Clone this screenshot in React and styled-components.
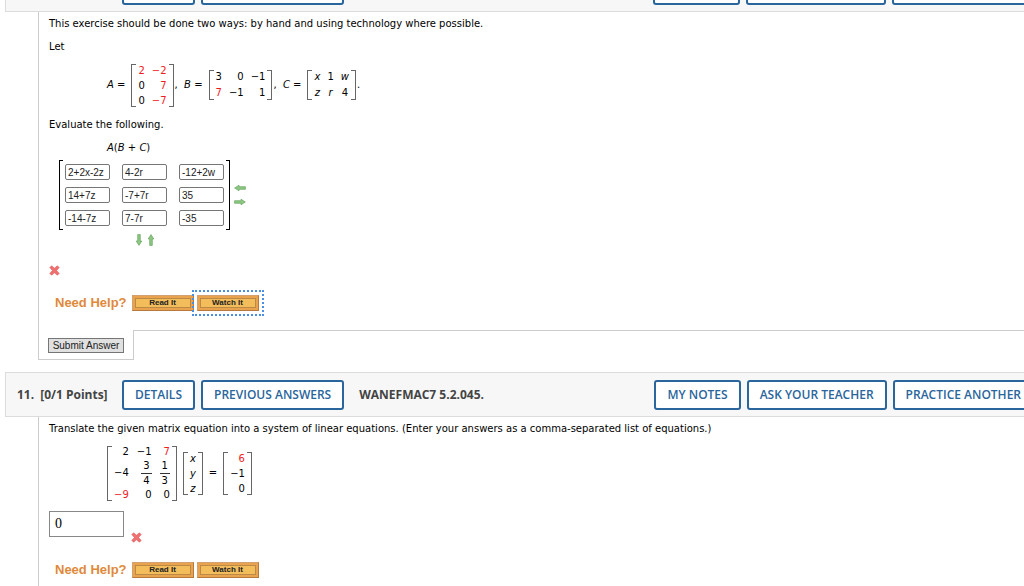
import React from "react";
import styled, {createGlobalStyle, css} from "styled-components";

const HELP = ["Read It", "Watch It"];
const SOLUTION = [
    ["2+2x-2z", "4-2r", "-12+2w"],
    ["14+7z", "-7+7r", "35"],
    ["-14-7z", "7-7r", "-35"],
];

const Cross = () => (
    <svg width="11" height="11" viewBox="0 0 11 11" role="img" aria-label="Incorrect">
        <path d="M0.8 2.6 2.6 0.8 5.5 3.2 8.4 0.8 10.2 2.6 7.6 5.5 10.2 8.4 8.4 10.2 5.5 7.8 2.6 10.2 0.8 8.4 3.4 5.5Z" fill="#ee7070" stroke="#e45c5c" strokeWidth="0.6"/>
    </svg>
)

const Arrow = ({turn = 0}) => (
    <svg width="12" height="12" viewBox="0 0 12 12" aria-hidden="true">
        <path transform={`rotate(${turn} 6 6)`} d="M0.6 4.7H7V3.2L11.4 6 7 8.8V7.3H0.6Z" fill="#8cc882" stroke="#69a562" strokeWidth="0.7"/>
    </svg>
)

function QuestionBar({number, points, code}) {
    return <Bar>
        <Points>
            <span>{number}</span>
            <span>{points}</span>
        </Points>
        <Actions>
            <BarButton type="button">DETAILS</BarButton>
            <BarButton type="button">PREVIOUS ANSWERS</BarButton>
        </Actions>
        <Code>{code}</Code>
        <Actions $end>
            <BarButton type="button">MY NOTES</BarButton>
            <BarButton type="button">ASK YOUR TEACHER</BarButton>
            <BarButton type="button">PRACTICE ANOTHER</BarButton>
        </Actions>
    </Bar>
}

// bar of the question above, only its lower edge is in view
function ScrolledBar() {
    return <Bar $scrolled>
        <Points />
        <Actions>
            <BarButton type="button" $width={73} aria-label="Details" />
            <BarButton type="button" $width={143} aria-label="Previous answers" />
        </Actions>
        <Actions $end>
            <BarButton type="button" $width={87} aria-label="My notes" />
            <BarButton type="button" $width={140} aria-label="Ask your teacher" />
            <BarButton type="button" $width={142} aria-label="Practice another" />
        </Actions>
    </Bar>
}

// "!" in front of a value marks it as randomized (red)
function Matrix({rows, align, row, gap = 7}) {
    return <Bracket>
        <Cells $cols={rows[0].length} $align={align} $row={row} $gap={gap}>
            {rows.flat().map((each, index) => {
                if (Array.isArray(each)) {
                    return <Fraction key={index}><span>{each[0]}</span><span>{each[1]}</span></Fraction>
                }
                const red = each.startsWith("!");
                const text = red ? each.slice(1) : each;
                return <Cell key={index} $red={red} $italic={/[a-z]/.test(text)}>{text}</Cell>
            })}
        </Cells>
    </Bracket>
}

function NeedHelp({focused}) {
    return <Help>
        <HelpTitle>Need Help?</HelpTitle>
        {HELP.map(each => <HelpButton type="button" key={each} $focused={each === focused}>{each}</HelpButton>)}
    </Help>
}

export default function App() {
    return <Page>
        <Global />
        <ScrolledBar />

        <Question>
            <Text>This exercise should be done two ways: by hand and using technology where possible.</Text>
            <Text>Let</Text>
            <Equation $height={46}>
                <span><i>A</i> =</span>
                <Matrix row={15} rows={[["!2", "!−2"], ["0", "!7"], ["0", "!−7"]]} />
                <After>,&nbsp; <i>B</i> =</After>
                <Matrix row={16} rows={[["3", "0", "−1"], ["!7", "−1", "1"]]} />
                <After>,&nbsp; <i>C</i> =</After>
                <Matrix row={16} align="center" rows={[["x", "1", "w"], ["z", "r", "4"]]} />
                <After>.</After>
            </Equation>
            <Text>Evaluate the following.</Text>
            <Expression><i>A</i>(<i>B</i> + <i>C</i>)</Expression>
            <Answer>
                <AnswerBracket>
                    {SOLUTION.map((line, r) => line.map((each, c) =>
                        <Entry key={`${r}${c}`} aria-label={`Row ${r + 1}, column ${c + 1}`} defaultValue={each} />
                    ))}
                </AnswerBracket>
                <Resize $column>
                    <IconButton type="button" aria-label="Remove column"><Arrow turn={180} /></IconButton>
                    <IconButton type="button" aria-label="Add column"><Arrow /></IconButton>
                </Resize>
                <Resize>
                    <IconButton type="button" aria-label="Add row"><Arrow turn={90} /></IconButton>
                    <IconButton type="button" aria-label="Remove row"><Arrow turn={-90} /></IconButton>
                </Resize>
            </Answer>
            <Mark><Cross /></Mark>
            <NeedHelp focused="Watch It" />
        </Question>
        <Footer>
            <Tab><Submit type="submit">Submit Answer</Submit></Tab>
            <Rule />
        </Footer>

        <QuestionBar number="11." points="[0/1 Points]" code="WANEFMAC7 5.2.045." />
        <Question>
            <Text>Translate the given matrix equation into a system of linear equations. (Enter your answers as a comma-separated list of equations.)</Text>
            <Equation $height={58}>
                <Matrix row={14} gap={8} rows={[["2", "−1", "!7"], ["−4", ["3", "4"], ["1", "3"]], ["!−9", "0", "0"]]} />
                <Matrix row={15} align="center" rows={[["x"], ["y"], ["z"]]} />
                <span>=</span>
                <Matrix row={15} rows={[["!6"], ["−1"], ["0"]]} />
            </Equation>
            <Reply>
                <ReplyInput aria-label="Equations" defaultValue="0" />
                <Cross />
            </Reply>
            <NeedHelp />
        </Question>
    </Page>
}

const Global = createGlobalStyle`
* {
    box-sizing: border-box;
}
body {
    margin: 0;
    background: #fff;
    overflow: hidden;
}
`

const Page = styled.main`
padding-left: 5px;
overflow: hidden;
color: #000;
font: 10px/16px "DejaVu Sans", Verdana, sans-serif;
`

const Bar = styled.header`
display: flex;
align-items: center;
height: 45px;
margin-top: ${p => p.$scrolled ? "-33px" : "0"};
margin-right: -22px;
padding: 0 11px;
background: #f7f7f7;
border: 1px solid #dcdcdc;
color: #444;
font: 700 12px/16px "Open Sans", sans-serif;
white-space: nowrap;
`

const Points = styled.div`
display: flex;
gap: 6px;
width: 105px;
`

const Actions = styled.div`
display: flex;
flex: none;
gap: 6px;
margin-left: ${p => p.$end ? "auto" : "0"};
`

const BarButton = styled.button`
width: ${p => p.$width ? `${p.$width}px` : "auto"};
height: 30px;
padding: 0 11px;
background: #fff;
border: 2px solid #2a659c;
border-radius: 3px;
color: #2a659c;
font: 600 12px/16px "Open Sans", sans-serif;
`

const Code = styled.span`
margin-left: 15px;
`

const Question = styled.section`
margin-left: 33px;
padding: 4px 10px 19px;
border-left: 1px solid #ccc;
`

const Text = styled.p`
margin: 0 0 7px;
`

const Equation = styled.div`
display: flex;
align-items: center;
gap: 6px;
height: ${p => p.$height}px;
margin: 0 0 9px 58px;
`

// punctuation that hugs the bracket before it
const After = styled.span`
margin-left: -5px;
`

const Bracket = styled.div`
position: relative;
padding: 0 7px;
&::before, &::after {
    content: "";
    position: absolute;
    top: 1px;
    bottom: 1px;
    left: 0;
    width: 4px;
    border: 1px solid #666;
    border-right: 0;
}
&::after {
    left: auto;
    right: 0;
    transform: scaleX(-1);
}
`

const Cells = styled.div`
display: grid;
grid-template-columns: repeat(${p => p.$cols}, auto);
column-gap: ${p => p.$gap}px;
align-items: center;
justify-items: ${p => p.$align || "end"};
line-height: ${p => p.$row}px;
`

const Cell = styled.span`
color: ${p => p.$red ? "#f01c1c" : "inherit"};
font-style: ${p => p.$italic ? "italic" : "normal"};
`

const Fraction = styled.span`
display: flex;
flex-direction: column;
text-align: center;
span {
    padding: 0 2px;
}
span + span {
    border-top: 1px solid #333;
}
`

const Expression = styled.p`
margin: 0 0 4px 58px;
`

const Answer = styled.div`
display: grid;
grid-template-columns: max-content auto;
justify-content: start;
align-items: center;
gap: 4px;
margin-left: 10px;
`

const AnswerBracket = styled(Bracket)`
display: grid;
grid-template-columns: repeat(3, 45px);
gap: 7px 12px;
padding: 4px 6px;
&::before, &::after {
    top: 0;
    bottom: 0;
    width: 3px;
    border-color: #000;
}
`

const Entry = styled.input`
width: 100%;
height: 16px;
padding: 0 2px;
border: 1px solid #767676;
border-radius: 2px;
color: #222;
font: 10px "Liberation Sans", Arial, sans-serif;
`

const Resize = styled.div`
display: flex;
justify-content: center;
${p => p.$column && css`flex-direction: column;`}
gap: ${p => p.$column ? "2px" : "0"};
`

const IconButton = styled.button`
display: flex;
padding: 0;
background: none;
border: 0;
`

const Mark = styled.div`
display: flex;
margin-top: 19px;
`

const Help = styled.div`
display: flex;
align-items: center;
gap: 3px;
margin: 19px 0 0 6px;
`

const HelpTitle = styled.span`
margin-right: 2px;
color: #e0893a;
font: bold 13px/16px "Liberation Sans", Arial, sans-serif;
`

const HelpButton = styled.button`
width: 62px;
height: 16px;
padding: 0;
background: #f3bd5c;
border: 1px solid;
border-color: #d3a071 #b87a3c #b87a3c #d3a071;
box-shadow: inset 0 0 0 2px #e9a24d, inset 0 0 0 3px #bd8a45;
color: #222;
font: bold 8px/10px "Liberation Sans", Arial, sans-serif;
${p => p.$focused && css`
    outline: 2px dotted #4a8fe0;
    outline-offset: 3px;
`}
`

const Footer = styled.div`
display: flex;
margin: 0 0 12px 33px;
border-left: 1px solid #ccc;
`

const Tab = styled.div`
width: 95px;
padding: 8px 0 6px 9px;
border: 1px solid #ccc;
border-width: 0 1px 1px 0;
`

const Rule = styled.div`
flex: 1;
border-top: 1px solid #ccc;
`

const Submit = styled.button`
display: block;
width: 76px;
height: 15px;
padding: 0;
background: #e0e0e0;
border: 1px solid #767676;
color: #222;
font: 10px/12px "Liberation Sans", Arial, sans-serif;
white-space: nowrap;
`

const Reply = styled.div`
display: flex;
align-items: flex-end;
gap: 7px;
height: 32px;
`

const ReplyInput = styled.input`
align-self: flex-start;
width: 75px;
height: 26px;
padding: 0 5px;
border: 1px solid #888;
font: 14px "Liberation Serif", "Times New Roman", serif;
`
